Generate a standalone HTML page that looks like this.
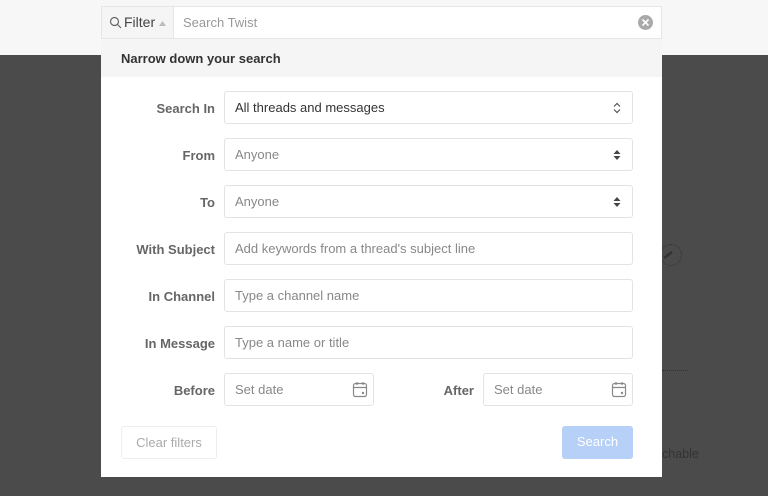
<!DOCTYPE html>
<html><head><style>
*{box-sizing:border-box;margin:0;padding:0}
body{width:768px;height:496px;overflow:hidden;background:#4b4b4b;font-family:"Liberation Sans",sans-serif;position:relative}
.top{position:absolute;left:0;top:0;width:768px;height:55px;background:#f7f7f7}
.modal{position:absolute;left:101px;top:39px;width:561px;height:438px;background:#fff}
.bar{position:absolute;left:101px;top:6px;width:561px;height:33px;background:#fff;border:1px solid #e6e6e6}
.filt{position:absolute;left:0;top:0;width:72px;height:31px;background:#f5f5f5;border-right:1px solid #e6e6e6;font-size:14px;color:#444;line-height:31px;padding-left:22px;white-space:nowrap}
.hdr{position:absolute;left:0;top:0;width:561px;height:38px;background:#f5f5f5;font-size:13px;font-weight:bold;color:#333;line-height:40px;padding-left:20px}
.lbl{position:absolute;width:114px;text-align:right;font-size:13px;font-weight:bold;color:#666;left:0}
.fld{position:absolute;left:123px;width:409px;height:33px;border:1px solid #e3e3e3;border-radius:3px;font-size:13px;color:#888;line-height:31px;padding-left:10px}
.dark{color:#333}
.btn{position:absolute;top:387px;height:33px;border-radius:3px;font-size:13px;line-height:31px;text-align:center}
.ar{position:absolute;right:11px;top:10px}
</style></head><body>
<div class="top"></div>
<div style="position:absolute;left:660px;top:244px;width:22px;height:22px;border:1px dotted #333;border-radius:50%"></div>
<svg style="position:absolute;left:662px;top:250px" width="14" height="10"><path d="M2 8L10 2" stroke="#333" stroke-width="2.5"/></svg>
<div style="position:absolute;left:662px;top:370px;width:26px;border-top:1px dotted #333"></div>
<div style="position:absolute;left:662px;top:447px;font-size:12.5px;color:#333">chable</div>
<div class="modal">
<div class="hdr">Narrow down your search</div>
<div class="lbl" style="top:62px">Search In</div><div class="fld dark" style="top:52px">All threads and messages<svg class="ar" width="8" height="12" viewBox="0 0 8 12" fill="none" stroke="#555" stroke-width="1.2"><path d="M1 4.5L4 1.5L7 4.5M1 7.5L4 10.5L7 7.5"/></svg></div>
<div class="lbl" style="top:109px">From</div><div class="fld" style="top:99px">Anyone<svg class="ar" width="8" height="12" viewBox="0 0 8 12" fill="#444"><path d="M0.5 5L4 1L7.5 5zM0.5 7L4 11L7.5 7z"/></svg></div>
<div class="lbl" style="top:156px">To</div><div class="fld" style="top:146px">Anyone<svg class="ar" width="8" height="12" viewBox="0 0 8 12" fill="#444"><path d="M0.5 5L4 1L7.5 5zM0.5 7L4 11L7.5 7z"/></svg></div>
<div class="lbl" style="top:203px">With Subject</div><div class="fld" style="top:193px">Add keywords from a thread's subject line</div>
<div class="lbl" style="top:250px">In Channel</div><div class="fld" style="top:240px">Type a channel name</div>
<div class="lbl" style="top:297px">In Message</div><div class="fld" style="top:287px">Type a name or title</div>
<div class="lbl" style="top:344px">Before</div><div class="fld" style="top:334px;width:150px">Set date<svg style="position:absolute;right:5px;top:7px" width="16" height="17" viewBox="0 0 16 17" fill="none" stroke="#888" stroke-width="1.2"><rect x="1.5" y="2.5" width="13" height="13" rx="2"/><path d="M1.5 6.5h13M5 1v3M11 1v3"/><circle cx="11" cy="12" r=".6" fill="#888"/></svg></div>
<div style="position:absolute;left:300px;top:344px;width:73px;text-align:right;font-size:13px;font-weight:bold;color:#666">After</div>
<div class="fld" style="top:334px;left:382px;width:150px">Set date<svg style="position:absolute;right:5px;top:7px" width="16" height="17" viewBox="0 0 16 17" fill="none" stroke="#888" stroke-width="1.2"><rect x="1.5" y="2.5" width="13" height="13" rx="2"/><path d="M1.5 6.5h13M5 1v3M11 1v3"/><circle cx="11" cy="12" r=".6" fill="#888"/></svg></div>
<div class="btn" style="left:20px;width:96px;border:1px solid #eee;color:#aaa">Clear filters</div>
<div class="btn" style="left:461px;width:71px;background:#b6d0f7;color:#fff">Search</div>
</div>
<div class="bar">
<div class="filt"><svg style="position:absolute;left:7px;top:9px" width="13" height="13" viewBox="0 0 13 13" fill="none" stroke="#666" stroke-width="1.2"><circle cx="5.5" cy="5.5" r="4"/><path d="M8.5 8.5l3.5 3.5"/></svg>Filter <svg width="7" height="5" viewBox="0 0 7 5" style="vertical-align:1px"><path d="M0 5L3.5 0L7 5z" fill="#bbb"/></svg></div>
<div style="position:absolute;left:81px;top:0;line-height:31px;font-size:13px;color:#999">Search Twist</div>
<svg style="position:absolute;right:8px;top:8px" width="15" height="15" viewBox="0 0 15 15"><circle cx="7.5" cy="7.5" r="7.5" fill="#aaa"/><path d="M4.5 4.5l6 6M10.5 4.5l-6 6" stroke="#fff" stroke-width="1.6"/></svg>
</div>
</body></html>
